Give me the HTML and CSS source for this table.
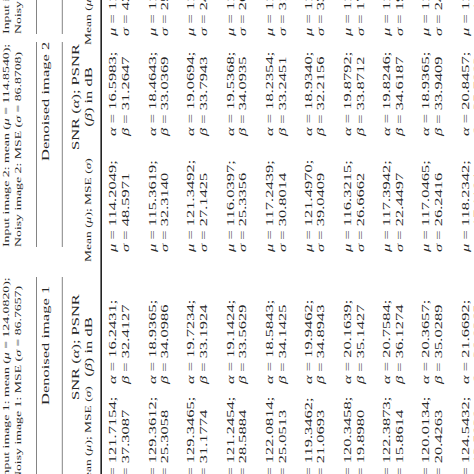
FILE: index.html
```html
<!DOCTYPE html>
<html lang="en">
<head>
<meta charset="utf-8">
<title>Denoising results table</title>
<link rel="stylesheet" href="styles.css">
</head>
<body>
<div class="stage">
  <div class="rot">
    <table class="t">
      <colgroup>
        <col class="c1"><col class="c2"><col class="c3"><col class="c4"><col class="c5">
      </colgroup>
      <thead>
        <tr class="r-group">
          <th colspan="2" class="gh"><div class="grp g1">
            <div class="stats">Input image 1: mean (<i>μ</i> = 124.0820);<br>Noisy image 1: MSE (<i>σ</i> = 86.7657)</div>
            <div class="den">Denoised image 1</div>
          </div></th>
          <th colspan="2" class="gh"><div class="grp g2">
            <div class="stats">Input image 2: mean (<i>μ</i> = 114.8540);<br>Noisy image 2: MSE (<i>σ</i> = 86.8708)</div>
            <div class="den">Denoised image 2</div>
          </div></th>
          <th class="gh"><div class="grp g3">
            <div class="stats">Input image 3: mean (<i>μ</i> = 113.2406);<br>Noisy image 3: MSE (<i>σ</i> = 87.0152)</div>
            <div class="den">Denoised image 3</div>
          </div></th>
        </tr>
        <tr class="r-cols">
          <th class="ch mh k1">Mean (<i>μ</i>); MSE (<i>σ</i>)</th>
          <th class="ch sh k2"><span class="stack">SNR (<i>α</i>); PSNR<br>(<i>β</i>) in dB</span></th>
          <th class="ch mh k3">Mean (<i>μ</i>); MSE (<i>σ</i>)</th>
          <th class="ch sh k4"><span class="stack">SNR (<i>α</i>); PSNR<br>(<i>β</i>) in dB</span></th>
          <th class="ch mh k5">Mean (<i>μ</i>); MSE (<i>σ</i>)</th>
        </tr>
      </thead>
      <tbody>
        <tr><td class="d k1"><i>μ</i> = 121.7154;<br><i>σ</i> = 37.3087</td><td class="d k2"><i>α</i> = 16.2431;<br><i>β</i> = 32.4127</td><td class="d k3"><i>μ</i> = 114.2049;<br><i>σ</i> = 48.5971</td><td class="d k4"><i>α</i> = 16.5983;<br><i>β</i> = 31.2647</td><td class="d k5"><i>μ</i> = 114.0512;<br><i>σ</i> = 42.3816</td></tr>
        <tr><td class="d k1"><i>μ</i> = 129.3612;<br><i>σ</i> = 25.3058</td><td class="d k2"><i>α</i> = 18.9365;<br><i>β</i> = 34.0986</td><td class="d k3"><i>μ</i> = 115.3619;<br><i>σ</i> = 32.3140</td><td class="d k4"><i>α</i> = 18.4643;<br><i>β</i> = 33.0369</td><td class="d k5"><i>μ</i> = 119.2631;<br><i>σ</i> = 25.8047</td></tr>
        <tr><td class="d k1"><i>μ</i> = 129.3465;<br><i>σ</i> = 31.1774</td><td class="d k2"><i>α</i> = 19.7234;<br><i>β</i> = 33.1924</td><td class="d k3"><i>μ</i> = 121.3492;<br><i>σ</i> = 27.1425</td><td class="d k4"><i>α</i> = 19.0694;<br><i>β</i> = 33.7943</td><td class="d k5"><i>μ</i> = 118.4725;<br><i>σ</i> = 24.1093</td></tr>
        <tr><td class="d k1"><i>μ</i> = 121.2454;<br><i>σ</i> = 28.5884</td><td class="d k2"><i>α</i> = 19.1424;<br><i>β</i> = 33.5629</td><td class="d k3"><i>μ</i> = 116.0397;<br><i>σ</i> = 25.3356</td><td class="d k4"><i>α</i> = 19.5368;<br><i>β</i> = 34.0935</td><td class="d k5"><i>μ</i> = 117.6284;<br><i>σ</i> = 26.4150</td></tr>
        <tr><td class="d k1"><i>μ</i> = 122.0814;<br><i>σ</i> = 25.0513</td><td class="d k2"><i>α</i> = 18.5843;<br><i>β</i> = 34.1425</td><td class="d k3"><i>μ</i> = 117.2439;<br><i>σ</i> = 30.8014</td><td class="d k4"><i>α</i> = 18.2354;<br><i>β</i> = 33.2451</td><td class="d k5"><i>μ</i> = 114.3519;<br><i>σ</i> = 31.0726</td></tr>
        <tr><td class="d k1"><i>μ</i> = 119.3462;<br><i>σ</i> = 21.0693</td><td class="d k2"><i>α</i> = 19.9462;<br><i>β</i> = 34.8943</td><td class="d k3"><i>μ</i> = 121.4970;<br><i>σ</i> = 39.0409</td><td class="d k4"><i>α</i> = 18.9340;<br><i>β</i> = 32.2156</td><td class="d k5"><i>μ</i> = 114.8903;<br><i>σ</i> = 33.2685</td></tr>
        <tr><td class="d k1"><i>μ</i> = 120.3458;<br><i>σ</i> = 19.8980</td><td class="d k2"><i>α</i> = 20.1639;<br><i>β</i> = 35.1427</td><td class="d k3"><i>μ</i> = 116.3215;<br><i>σ</i> = 26.6662</td><td class="d k4"><i>α</i> = 19.8792;<br><i>β</i> = 33.8712</td><td class="d k5"><i>μ</i> = 110.4127;<br><i>σ</i> = 17.9354</td></tr>
        <tr><td class="d k1"><i>μ</i> = 122.3873;<br><i>σ</i> = 15.8614</td><td class="d k2"><i>α</i> = 20.7584;<br><i>β</i> = 36.1274</td><td class="d k3"><i>μ</i> = 117.3942;<br><i>σ</i> = 22.4497</td><td class="d k4"><i>α</i> = 19.8246;<br><i>β</i> = 34.6187</td><td class="d k5"><i>μ</i> = 113.2056;<br><i>σ</i> = 19.6021</td></tr>
        <tr><td class="d k1"><i>μ</i> = 120.0134;<br><i>σ</i> = 20.4263</td><td class="d k2"><i>α</i> = 20.3657;<br><i>β</i> = 35.0289</td><td class="d k3"><i>μ</i> = 117.0465;<br><i>σ</i> = 26.2416</td><td class="d k4"><i>α</i> = 18.9365;<br><i>β</i> = 33.9409</td><td class="d k5"><i>μ</i> = 110.7348;<br><i>σ</i> = 24.5107</td></tr>
        <tr><td class="d k1"><i>μ</i> = 124.5432;<br><i>σ</i> = 13.5030</td><td class="d k2"><i>α</i> = 21.6692;<br><i>β</i> = 36.8265</td><td class="d k3"><i>μ</i> = 118.2342;<br><i>σ</i> = 17.1104</td><td class="d k4"><i>α</i> = 20.8457;<br><i>β</i> = 35.7982</td><td class="d k5"><i>μ</i> = 110.5962;<br><i>σ</i> = 16.8430</td></tr>
      </tbody>
    </table>
  </div>
</div>
</body>
</html>
```

FILE: styles.css
```css
html, body {
  margin: 0;
  padding: 0;
  background: #ffffff;
}

.stage {
  width: 474px;
  height: 474px;
  overflow: hidden;
  background: #ffffff;
}

/* The table is printed sideways: it is built upright, then turned
   a quarter turn and squeezed across its rows like the scanned page. */
.rot {
  width: 640px;
  transform-origin: 0 0;
  transform: translateY(520px) rotate(-90deg) scale(1, 0.625);
}

.t {
  border-collapse: collapse;
  table-layout: fixed;
  width: 600px;
  font-family: "Liberation Serif", "Times New Roman", serif;
  font-size: 16.5px;
  line-height: 20px;
  color: #262626;
}

.c1 { width: 118px; }
.c2 { width: 137px; }
.c3 { width: 113px; }
.c4 { width: 105px; }
.c5 { width: 127px; }

.t th,
.t td {
  padding: 0;
  text-align: left;
  font-weight: normal;
  white-space: nowrap;
  vertical-align: top;
}

.t i {
  font-style: italic;
}

/* group headings: statistics (small type) and the denoised label,
   each with a rule as wide as the statistics text */
.grp {
  display: inline-block;
  vertical-align: top;
}

.g1 { margin-left: 39px; }
.g2 { margin-left: 18px; }
.g3 { margin-left: 13px; }

.stats {
  font-size: 13.8px;
  line-height: 19.2px;
  padding-bottom: 19.2px;
  border-bottom: 1.6px solid #3a3a3a;
}

.den {
  text-align: left;
  padding: 5.1px 0 14.9px;
  border-bottom: 1.6px solid #3a3a3a;
}

.g1 .den { padding-left: 76px; }
.g2 .den { padding-left: 86px; }
.g3 .den { padding-left: 80px; }

/* column titles and the heavy rule beneath them */
.t .ch {
  padding-top: 12.9px;
  padding-bottom: 8.3px;
  border-bottom: 2.4px solid #222222;
}

.t .mh {
  vertical-align: bottom;
  font-size: 13.5px;
}

.stack {
  display: inline-block;
  text-align: center;
}

/* left offsets of each column's text */
.t .ch.k1 { padding-left: 30px; }
.t .ch.k2 { padding-left: 2px; }
.t .ch.k3 { padding-left: 3px; }
.t .ch.k4 { padding-left: 2px; }
.t .ch.k5 { padding-left: 2px; }

.t .d.k1 { padding-left: 31px; }
.t .d.k2 { padding-left: 18px; }
.t .d.k3 { padding-left: 13px; }
.t .d.k4 { padding-left: 16px; }
.t .d.k5 { padding-left: 11px; }

/* data cells */
.t .d {
  padding-top: 8.5px;
  padding-bottom: 14.1px;
}
```
